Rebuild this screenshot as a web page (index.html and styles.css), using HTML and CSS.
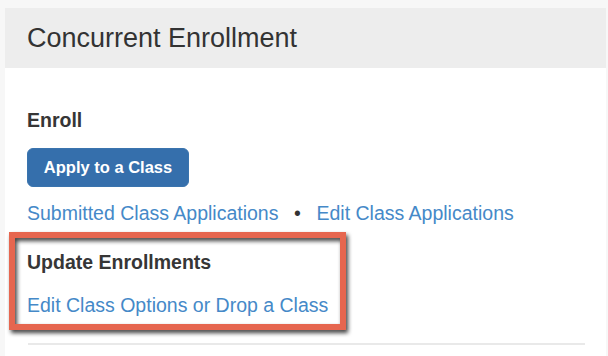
FILE: index.html
```html
<!DOCTYPE html>
<html>
<head>
<meta charset="utf-8">
<link rel="stylesheet" href="styles.css">
</head>
<body>
<div class="panel">
  <div class="panel-header">
    <h1 class="title">Concurrent Enrollment</h1>
  </div>
  <div class="panel-body">
    <h2 class="section-title enroll">Enroll</h2>
    <button class="btn">Apply to a Class</button>
    <div class="link-row">
      <a class="link" href="#">Submitted Class Applications</a><span class="sep">&bull;</span><a class="link" href="#">Edit Class Applications</a>
    </div>
    <h2 class="section-title update">Update Enrollments</h2>
    <div class="link-row single">
      <a class="link" href="#">Edit Class Options or Drop a Class</a>
    </div>
    <div class="divider"></div>
  </div>
  <div class="highlight"></div>
</div>
</body>
</html>
```
FILE: styles.css
```css
* { box-sizing: border-box; }
html, body {
  margin: 0;
  padding: 0;
  background: #f7f7f7;
  overflow: hidden;
}
body {
  font-family: "Liberation Sans", Arial, sans-serif;
  color: #333;
  width: 608px;
  height: 356px;
}
.panel {
  position: relative;
  margin: 8px 2px 0 5px;
  background: #fff;
  height: 348px;
}
.panel-header {
  height: 60px;
  background: #ededed;
  display: flex;
  align-items: center;
  padding-left: 22px;
}
.title {
  margin: 0;
  font-size: 27px;
  font-weight: normal;
  color: #333;
  line-height: 32px;
}
.panel-body {
  padding: 0 21px 0 22px;
  display: flex;
  flex-direction: column;
  align-items: flex-start;
}
.section-title {
  margin: 0;
  font-size: 19.5px;
  font-weight: bold;
  line-height: 22px;
  color: #363636;
}
.enroll { margin-top: 41px; }
.update { margin-top: 27px; }
.btn {
  margin-top: 17px;
  height: 39px;
  padding: 0 15px;
  border: 1px solid #3a74ae;
  border-radius: 6px;
  background: #356fac;
  color: #fff;
  font-family: "Liberation Sans", Arial, sans-serif;
  font-size: 16.5px;
  font-weight: bold;
  line-height: 37px;
  white-space: nowrap;
  min-width: 162px;
  text-align: center;
}
.link-row {
  margin-top: 15px;
  font-size: 19.5px;
  line-height: 22px;
  white-space: nowrap;
}
.link-row.single { margin-top: 21px; }
.link {
  color: #4589c8;
  text-decoration: none;
}
.sep {
  display: inline-block;
  width: 38px;
  text-align: center;
  color: #333;
}
.divider {
  margin-top: 27px;
  margin-left: 1px;
  align-self: stretch;
  height: 2px;
  background: #e9e9e9;
}
.highlight {
  position: absolute;
  left: 4px;
  top: 224px;
  width: 337px;
  height: 98px;
  border: 6px solid #e6664f;
  filter: drop-shadow(2px 3px 2px rgba(0, 0, 0, 0.75));
}
```
